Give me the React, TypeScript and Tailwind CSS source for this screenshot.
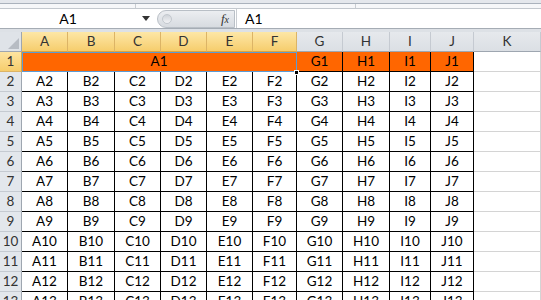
import React from "react";

const cols = ["A", "B", "C", "D", "E", "F", "G", "H", "I", "J"];
const rows = [2, 3, 4, 5, 6, 7, 8, 9, 10, 11, 12, 13];
const selected = ["A", "B", "C", "D", "E", "F"];

export default function App() {
  return (
    <div
      className="w-[541px] h-[300px] overflow-hidden bg-white text-black relative"
      style={{ fontFamily: "Lato, 'Noto Sans', sans-serif" }}
    >
      {/* ribbon bottom strip */}
      <div className="h-[3px] bg-[#e4e7ec] border-b border-[#aab2bc] box-content" />
      <div className="h-[4px] bg-[#f6f7f9] flex border-b border-[#c3c8ce] box-content">
        <div className="w-[136px] border-r border-[#c9cdd2]" />
        <div className="w-[220px] border-r border-[#c9cdd2]" />
      </div>

      {/* formula bar */}
      <div className="h-[19px] flex items-center bg-white border-b border-[#a5acb4] box-content">
        <div className="w-[136px] text-center text-[14px] leading-none">A1</div>
        <div className="w-[20px] flex justify-center">
          <svg width="8" height="5" viewBox="0 0 8 5">
            <path d="M0 0h8L4 5z" fill="#333" />
          </svg>
        </div>
        <div className="ml-[1px] w-[78px] h-[18px] rounded-l-full bg-gradient-to-b from-[#eceef1] to-[#d7dbe0] border border-[#b9bfc6] flex items-center justify-between pl-[4px] pr-[5px]">
          <div className="w-[10px] h-[10px] rounded-full bg-gradient-to-b from-[#d0d4d9] to-[#f2f3f5] border border-[#c3c8ce]" />
          <span
            className="text-[13px] italic leading-none text-[#333]"
            style={{ fontFamily: "'Liberation Serif', serif" }}
          >
            f<span className="text-[10px]">x</span>
          </span>
        </div>
        <div className="w-[9px] h-full border-l border-[#c9cdd2] ml-[1px]" />
        <div className="text-[14px] leading-none">A1</div>
      </div>

      <div className="h-[3px] bg-[#dde1e6]" />

      {/* sheet grid */}
      <div className="grid grid-cols-[22px_46px_47px_46px_46px_46px_44px_46px_47px_41px_43px_67px] auto-rows-[20px] text-[13.5px] relative">
        {/* header row */}
        <div className="bg-[#dfe3e8] border-r border-b border-[#9ea6b0] relative">
          <svg className="absolute right-[2px] bottom-[2px]" width="11" height="11" viewBox="0 0 11 11">
            <path d="M11 0V11H0z" fill="#b7bcc3" />
          </svg>
        </div>
        {cols.map((c) =>
          selected.includes(c) ? (
            <div
              key={c}
              className="flex items-center justify-center bg-gradient-to-b from-[#fde7a6] to-[#f6cd6c] border-r border-[#dcb466] border-b border-b-[#e2a33b] text-[#333]"
            >
              {c}
            </div>
          ) : (
            <div
              key={c}
              className="flex items-center justify-center bg-gradient-to-b from-[#e6e9ed] to-[#dbdfe4] border-r border-[#c5cad1] border-b border-b-[#9ea6b0] text-[#333]"
            >
              {c}
            </div>
          )
        )}
        <div className="flex items-center justify-center bg-gradient-to-b from-[#e6e9ed] to-[#dbdfe4] border-r border-[#c5cad1] border-b border-b-[#9ea6b0] text-[#333]">
          K
        </div>

        {/* row 1 */}
        <div className="flex items-center justify-center bg-gradient-to-b from-[#fde4a0] to-[#f6cd6c] border-r border-[#e2a33b] border-b border-b-[#dcb466] text-[#333]">
          1
        </div>
        <div className="col-span-6 flex items-center justify-center bg-[#ff6600] border-r border-b border-black">
          A1
        </div>
        {["G", "H", "I", "J"].map((c) => (
          <div
            key={c}
            className="flex items-center justify-center bg-[#ff6600] border-r border-b border-black"
          >
            {c}1
          </div>
        ))}
        <div className="border-r border-b border-[#d4d4d4]" />

        {/* rows 2+ */}
        {rows.map((r) => (
          <React.Fragment key={r}>
            <div className="flex items-center justify-center bg-[#e3e7ec] border-r border-[#9ea6b0] border-b border-b-[#c5cad1] text-[#333]">
              {r}
            </div>
            {cols.map((c) => (
              <div
                key={c}
                className="flex items-center justify-center border-r border-b border-black"
              >
                {c}
                {r}
              </div>
            ))}
            <div className="border-r border-b border-[#d4d4d4]" />
          </React.Fragment>
        ))}

        {/* selection outline around merged A1 */}
        <div className="absolute left-[22px] top-[20px] w-[275px] h-[20px] border border-[#5b9bd5] pointer-events-none" />
        <div className="absolute left-[294px] top-[38px] w-[5px] h-[5px] bg-black border border-white" />
      </div>
    </div>
  );
}
